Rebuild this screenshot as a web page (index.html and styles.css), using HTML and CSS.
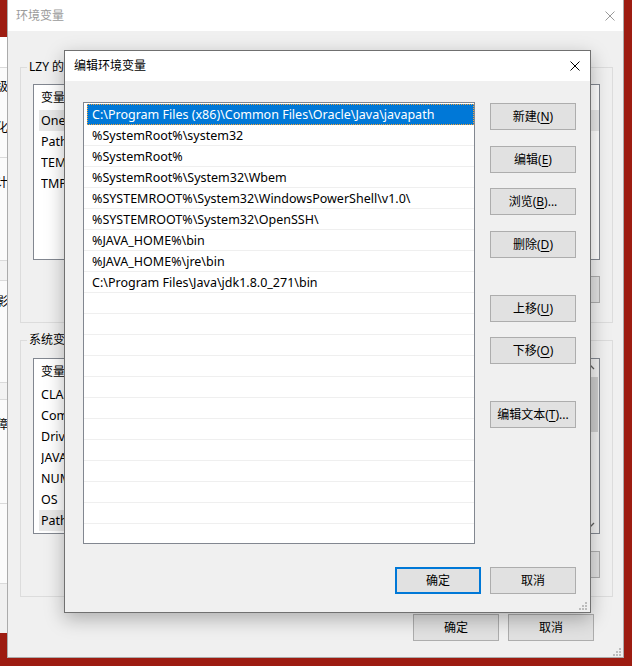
FILE: index.html
```html
<!DOCTYPE html>
<html lang="zh-CN">
<head>
<meta charset="utf-8">
<title>编辑环境变量</title>
<link rel="stylesheet" href="styles.css">
</head>
<body>
<div class="desk">

  <div class="win sysprop">
    <div class="sp-title"></div>
    <div class="sp-sec s1"><span class="frag f1">高级</span><span class="frag f2">优化</span></div>
    <div class="sp-sec s2"><span class="frag f3">计</span></div>
    <div class="sp-band b1"></div>
    <div class="sp-sec s3"><span class="frag f4">影</span></div>
    <div class="sp-band b2"></div>
    <div class="sp-sec s4"><span class="frag f5">故障</span></div>
    <div class="sp-sec s5"></div>
    <div class="sp-foot"></div>
  </div>

  <div class="win env">
    <div class="titlebar env-title">
      <span class="ttl">环境变量</span>
      <svg class="x env-x" width="10" height="10" viewBox="0 0 10 10"><path d="M0.5 0.5L9.5 9.5M9.5 0.5L0.5 9.5" stroke="#9a9a9a" stroke-width="1" fill="none"/></svg>
    </div>
    <div class="env-body">
      <fieldset class="grp g1">
        <legend>LZY 的用户变量(<u>U</u>)</legend>
        <div class="lv lv1">
          <div class="lv-main">
            <div class="lv-head"><span class="c1">变量</span><span class="c2">值</span></div>
            <div class="lv-row hl"><span class="c1">OneDrive</span><span class="c2">C:\Users\LZY\OneDrive</span></div>
            <div class="lv-row"><span class="c1">Path</span><span class="c2">C:\Users\LZY\AppData\Local\Microsoft\WindowsApps;</span></div>
            <div class="lv-row"><span class="c1">TEMP</span><span class="c2">C:\Users\LZY\AppData\Local\Temp</span></div>
            <div class="lv-row"><span class="c1">TMP</span><span class="c2">C:\Users\LZY\AppData\Local\Temp</span></div>
          </div>
        </div>
        <div class="grp-btns">
          <button class="btn">新建(<u>N</u>)...</button>
          <button class="btn">编辑(<u>E</u>)...</button>
          <button class="btn">删除(<u>D</u>)</button>
        </div>
      </fieldset>

      <fieldset class="grp g2">
        <legend>系统变量(<u>S</u>)</legend>
        <div class="lv lv2">
          <div class="lv-main">
            <div class="lv-head"><span class="c1">变量</span><span class="c2">值</span></div>
            <div class="lv-row"><span class="c1">CLASSPATH</span><span class="c2">.;%JAVA_HOME%\lib\dt.jar;%JAVA_HOME%\lib\tools.jar;</span></div>
            <div class="lv-row"><span class="c1">ComSpec</span><span class="c2">C:\Windows\system32\cmd.exe</span></div>
            <div class="lv-row"><span class="c1">DriverData</span><span class="c2">C:\Windows\System32\Drivers\DriverData</span></div>
            <div class="lv-row"><span class="c1">JAVA_HOME</span><span class="c2">C:\Program Files\Java\jdk1.8.0_271</span></div>
            <div class="lv-row"><span class="c1">NUMBER_OF_PROCESSORS</span><span class="c2">8</span></div>
            <div class="lv-row"><span class="c1">OS</span><span class="c2">Windows_NT</span></div>
            <div class="lv-row hl"><span class="c1">Path</span><span class="c2">C:\Program Files (x86)\Common Files\Oracle\Java\javapath;</span></div>
          </div>
          <div class="vscroll">
            <div class="sb-arrow"><svg width="17" height="17" viewBox="0 0 17 17"><path d="M5 10L8.5 6.5L12 10" fill="none" stroke="#606060" stroke-width="1.3"/></svg></div>
            <div class="sb-track"><div class="sb-thumb"></div></div>
            <div class="sb-arrow"><svg width="17" height="17" viewBox="0 0 17 17"><path d="M5 7L8.5 10.5L12 7" fill="none" stroke="#606060" stroke-width="1.3"/></svg></div>
          </div>
        </div>
        <div class="grp-btns">
          <button class="btn">新建(<u>W</u>)...</button>
          <button class="btn">编辑(<u>I</u>)...</button>
          <button class="btn">删除(<u>L</u>)</button>
        </div>
      </fieldset>

      <div class="env-foot">
        <button class="btn">确定</button>
        <button class="btn">取消</button>
      </div>
    </div>
    <svg class="grip env-grip" width="8" height="8" viewBox="0 0 8 8"><g fill="#bdbdbd"><rect x="6" y="0" width="2" height="2"/><rect x="3" y="3" width="2" height="2"/><rect x="6" y="3" width="2" height="2"/><rect x="0" y="6" width="2" height="2"/><rect x="3" y="6" width="2" height="2"/><rect x="6" y="6" width="2" height="2"/></g></svg>
  </div>

  <div class="win dlg">
    <div class="titlebar dlg-title">
      <span class="ttl">编辑环境变量</span>
      <svg class="x dlg-x" width="10" height="10" viewBox="0 0 10 10"><path d="M0.5 0.5L9.5 9.5M9.5 0.5L0.5 9.5" stroke="#000" stroke-width="1" fill="none"/></svg>
    </div>
    <div class="dlg-body">
      <div class="dlg-main">
        <div class="pl">
          <div class="pl-row sel">C:\Program Files (x86)\Common Files\Oracle\Java\javapath</div>
          <div class="pl-row">%SystemRoot%\system32</div>
          <div class="pl-row">%SystemRoot%</div>
          <div class="pl-row">%SystemRoot%\System32\Wbem</div>
          <div class="pl-row">%SYSTEMROOT%\System32\WindowsPowerShell\v1.0\</div>
          <div class="pl-row">%SYSTEMROOT%\System32\OpenSSH\</div>
          <div class="pl-row">%JAVA_HOME%\bin</div>
          <div class="pl-row">%JAVA_HOME%\jre\bin</div>
          <div class="pl-row">C:\Program Files\Java\jdk1.8.0_271\bin</div>
          <div class="pl-row"></div>
          <div class="pl-row"></div>
          <div class="pl-row"></div>
          <div class="pl-row"></div>
          <div class="pl-row"></div>
          <div class="pl-row"></div>
          <div class="pl-row"></div>
          <div class="pl-row"></div>
          <div class="pl-row"></div>
          <div class="pl-row"></div>
          <div class="pl-row"></div>
          <div class="pl-row"></div>
        </div>
        <div class="side">
          <button class="btn sb1">新建(<u>N</u>)</button>
          <button class="btn sb2">编辑(<u>E</u>)</button>
          <button class="btn sb3">浏览(<u>B</u>)...</button>
          <button class="btn sb4">删除(<u>D</u>)</button>
          <button class="btn sb5">上移(<u>U</u>)</button>
          <button class="btn sb6">下移(<u>O</u>)</button>
          <button class="btn sb7">编辑文本(<u>T</u>)...</button>
        </div>
      </div>
      <div class="dlg-foot">
        <button class="btn default">确定</button>
        <button class="btn">取消</button>
      </div>
    </div>
    <svg class="grip dlg-grip" width="8" height="8" viewBox="0 0 8 8"><g fill="#bdbdbd"><rect x="6" y="0" width="2" height="2"/><rect x="3" y="3" width="2" height="2"/><rect x="6" y="3" width="2" height="2"/><rect x="0" y="6" width="2" height="2"/><rect x="3" y="6" width="2" height="2"/><rect x="6" y="6" width="2" height="2"/></g></svg>
  </div>

</div>
</body>
</html>
```

FILE: styles.css
```css
* { box-sizing: border-box; }
html, body { margin: 0; padding: 0; }
body {
  width: 632px;
  height: 666px;
  overflow: hidden;
  background: #9d1c11;
  font-family: "Noto Sans", "Noto Sans CJK SC", sans-serif;
  font-size: 12px;
  color: #000;
}
u { text-decoration: underline; text-underline-offset: 2px; }

.desk { position: relative; width: 632px; height: 666px; overflow: hidden; }
.win { position: absolute; }

/* window behind, only a strip visible */
.sysprop {
  left: -292px; top: 37px; width: 300px; height: 596px;
  background: #fbfbfb;
  display: flex; flex-direction: column;
}
.sp-title { height: 31px; border-bottom: 1px solid #dadada; background: #fff; }
.sp-sec { display: flex; flex-direction: column; align-items: flex-end; border-bottom: 1px solid #dadada; }
.sp-band { background: #f3f3f3; border-bottom: 1px solid #dadada; }
.frag { display: block; line-height: 16px; height: 16px; font-size: 12px; }
.s1 { height: 90px; padding-top: 11px; }
.f2 { margin-top: 25px; }
.s2 { height: 103px; padding-top: 17px; }
.b1 { height: 20px; }
.s3 { height: 102px; padding-top: 13px; }
.b2 { height: 17px; }
.s4 { height: 104px; padding-top: 17px; }
.s5 { height: 80px; }
.sp-foot { flex: 1; background: #f0f0f0; }

.titlebar { display: flex; align-items: center; background: #fff; flex: none; }
.titlebar .ttl { flex: 1; line-height: 16px; }
.x { display: block; flex: none; }

/* 环境变量 window */
.env {
  left: 7px; top: -1px; width: 617px; height: 659px;
  border: 1px solid #ababab;
  background: #f0f0f0;
  display: flex; flex-direction: column;
}
.env-title { height: 31px; padding-left: 8px; }
.env-title .ttl { color: #9a9a9a; }
.env-x { margin-right: 8px; }
.env-body { flex: 1; padding: 28px 10px 0 12px; display: flex; flex-direction: column; }

.grp {
  margin: 0;
  border: 1px solid #dcdcdc;
  padding: 9px 12px 19px;
  min-width: 0;
}
.grp legend { padding: 0 2px; margin-left: -6px; line-height: 16px; font-size: 12px; }
.g2 { margin-top: 9px; padding-top: 10px; padding-bottom: 18px; }

.lv {
  height: 176px;
  border: 1px solid #828790;
  background: #fff;
  display: flex;
  overflow: hidden;
}
.lv-main { flex: 1; min-width: 0; overflow: hidden; }
.lv-head { height: 25px; display: flex; align-items: center; padding-left: 7px; line-height: 16px; }
.lv-head .c1 { width: 146px; border-right: 1px solid #e5e5e5; height: 25px; line-height: 25px; }
.lv-head .c2 { padding-left: 8px; }
.lv-row {
  height: 21px; line-height: 21px;
  margin-left: 5px; padding-left: 2px;
  display: flex; white-space: nowrap;
  font-size: 12.5px;
}
.lv-row .c1 { width: 146px; flex: none; overflow: hidden; }
.lv-row .c2 { padding-left: 6px; }
.lv-row.hl { background: #e8e8e8; }

.vscroll { width: 17px; flex: none; background: #f0f0f0; display: flex; flex-direction: column; }
.sb-arrow { height: 17px; flex: none; }
.sb-arrow svg { display: block; }
.sb-track { flex: 1; padding: 1px 1px 0; }
.sb-thumb { height: 55px; background: #cdcdcd; }

.grp-btns { display: flex; justify-content: flex-end; gap: 9px; margin-top: 16px; }
.g2 .grp-btns { margin-top: 17px; }

.btn {
  width: 86px; height: 27px;
  padding: 0;
  border: 1px solid #adadad;
  background: #e1e1e1;
  font-family: "Noto Sans", "Noto Sans CJK SC", sans-serif;
  font-size: 12px;
  line-height: 16px;
  color: #000;
  text-align: center;
  white-space: nowrap;
}

.env-foot { display: flex; justify-content: flex-end; gap: 9px; margin-top: 17px; padding-right: 19px; }

.grip { position: absolute; display: block; }
.env-grip { right: 2px; bottom: 1px; }
.dlg-grip { right: 3px; bottom: 2px; }

/* 编辑环境变量 dialog */
.dlg {
  left: 64px; top: 50px; width: 527px; height: 563px;
  border: 1px solid #707070;
  background: #f0f0f0;
  box-shadow: 0 6px 18px rgba(0, 0, 0, 0.28);
  display: flex; flex-direction: column;
}
.dlg-title { height: 30px; padding-left: 9px; }
.dlg-x { margin-right: 10px; }
.dlg-body { flex: 1; padding: 21px 14px 0 18px; display: flex; flex-direction: column; }
.dlg-main { display: flex; gap: 15px; }

.pl {
  width: 392px; height: 442px;
  border: 1px solid #828790;
  background: #fff;
  padding-top: 1px;
  overflow: hidden;
  flex: none;
}
.pl-row {
  height: 21px;
  border-bottom: 1px solid #efefef;
  padding-left: 8px;
  padding-top: 1px;
  font-size: 12.5px;
  line-height: 19px;
  white-space: nowrap;
  overflow: hidden;
}
.pl-row.sel {
  background: #0078d7;
  color: #fff;
  margin-left: 3px;
  padding-left: 5px;
  border-bottom-color: #0078d7;
  outline: 1px dotted #f3a33a;
  outline-offset: -1px;
}

.side { width: 86px; display: flex; flex-direction: column; padding-top: 1px; flex: none; }
.sb2 { margin-top: 16px; }
.sb3 { margin-top: 15px; }
.sb4 { margin-top: 16px; }
.sb5 { margin-top: 37px; }
.sb6 { margin-top: 15px; }
.sb7 { margin-top: 37px; }

.dlg-foot { display: flex; justify-content: flex-end; gap: 9px; margin-top: 23px; }
.btn.default { border: 2px solid #0078d7; }
```
